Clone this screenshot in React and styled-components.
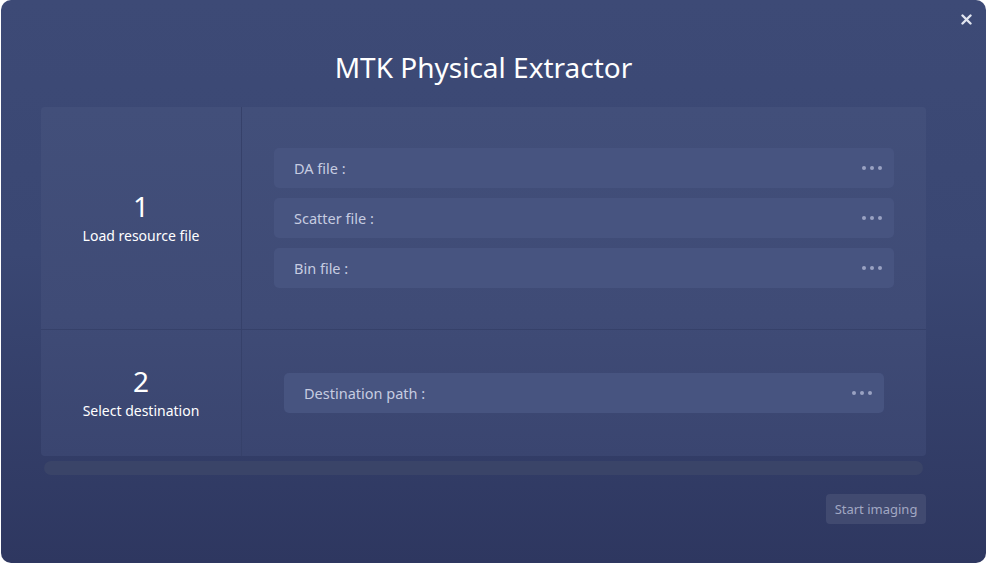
import styled, { createGlobalStyle } from 'styled-components';

const GlobalStyle = createGlobalStyle`
    html, body {
        margin: 0;
        padding: 0;
        background: #ffffff;
    }
    body {
        font-family: "Noto Sans", "Open Sans", sans-serif;
    }
`;

const resourceFields = ['DA file :', 'Scatter file :', 'Bin file :'];

function Dots() {
    return (
        <StyledDots>
            <span />
            <span />
            <span />
        </StyledDots>
    );
}

function FileField({ label }) {
    return (
        <StyledField>
            <span className="label">{label}</span>
            <Dots />
        </StyledField>
    );
}

export default function App() {
    return (
        <>
            <GlobalStyle />
            <StyledWindow>
                <CloseButton aria-label="close">
                    <svg width="11" height="11" viewBox="0 0 11 11">
                        <path d="M1.5 1.5 L9.5 9.5 M9.5 1.5 L1.5 9.5" stroke="#e2e6f0" strokeWidth="2.4" strokeLinecap="round" />
                    </svg>
                </CloseButton>
                <Content>
                    <Title>MTK Physical Extractor</Title>
                    <Panel>
                        <StepCell>
                            <span className="num">1</span>
                            <span className="caption">Load resource file</span>
                        </StepCell>
                        <FieldCell pad={32}>
                            {resourceFields.map((label) => (
                                <FileField key={label} label={label} />
                            ))}
                        </FieldCell>
                        <StepCell last>
                            <span className="num">2</span>
                            <span className="caption">Select destination</span>
                        </StepCell>
                        <FieldCell pad={42} last>
                            <FileField label="Destination path :" />
                        </FieldCell>
                    </Panel>
                    <Progress />
                    <Footer>
                        <StartButton>Start imaging</StartButton>
                    </Footer>
                </Content>
            </StyledWindow>
        </>
    );
}

const StyledWindow = styled.div`
    position: relative;
    width: 985px;
    height: 563px;
    margin-left: 1px;
    border-radius: 10px;
    background: linear-gradient(180deg, #3d4a76 0%, #3a4773 45%, #2e3760 100%);
    overflow: hidden;
`;

const CloseButton = styled.div`
    position: absolute;
    top: 14px;
    right: 14px;
    width: 11px;
    height: 11px;
    display: flex;
`;

const Content = styled.div`
    display: flex;
    flex-direction: column;
    padding: 47px 60px 0 40px;
`;

const Title = styled.h1`
    margin: 0;
    height: 40px;
    line-height: 40px;
    text-align: center;
    font-size: 28px;
    font-weight: 400;
    color: #ffffff;
`;

const Panel = styled.div`
    margin-top: 20px;
    display: grid;
    grid-template-columns: 201px 1fr;
    grid-template-rows: 223px 126px;
    border-radius: 4px;
    background: linear-gradient(180deg, #424f7a 0%, #3f4b76 60%, #3a4570 100%);
`;

const StepCell = styled.div`
    display: flex;
    flex-direction: column;
    align-items: center;
    justify-content: center;
    border-right: 1px solid #36416a;
    border-bottom: ${(p) => (p.last ? 'none' : '1px solid #36416a')};
    color: #ffffff;
    .num {
        font-size: 28px;
        line-height: 30px;
    }
    .caption {
        margin-top: 6px;
        font-size: 14px;
        line-height: 18px;
    }
`;

const FieldCell = styled.div`
    display: flex;
    flex-direction: column;
    justify-content: center;
    gap: 10px;
    padding: 0 ${(p) => p.pad}px;
    border-bottom: ${(p) => (p.last ? 'none' : '1px solid #36416a')};
`;

const StyledField = styled.div`
    display: flex;
    align-items: center;
    justify-content: space-between;
    height: 40px;
    padding: 0 12px 0 20px;
    border-radius: 5px;
    background: #475480;
    .label {
        font-size: 14.5px;
        color: #c6cce0;
    }
`;

const StyledDots = styled.div`
    display: flex;
    gap: 4px;
    span {
        width: 4px;
        height: 4px;
        border-radius: 50%;
        background: #9aa2c2;
    }
`;

const Progress = styled.div`
    margin: 5px 3px 0;
    height: 14px;
    border-radius: 7px;
    background: #3a4468;
`;

const Footer = styled.div`
    display: flex;
    justify-content: flex-end;
    margin-top: 19px;
`;

const StartButton = styled.div`
    display: flex;
    align-items: center;
    justify-content: center;
    width: 100px;
    height: 30px;
    border-radius: 4px;
    background: #414a70;
    color: #a2a8c3;
    font-size: 13px;
`;
